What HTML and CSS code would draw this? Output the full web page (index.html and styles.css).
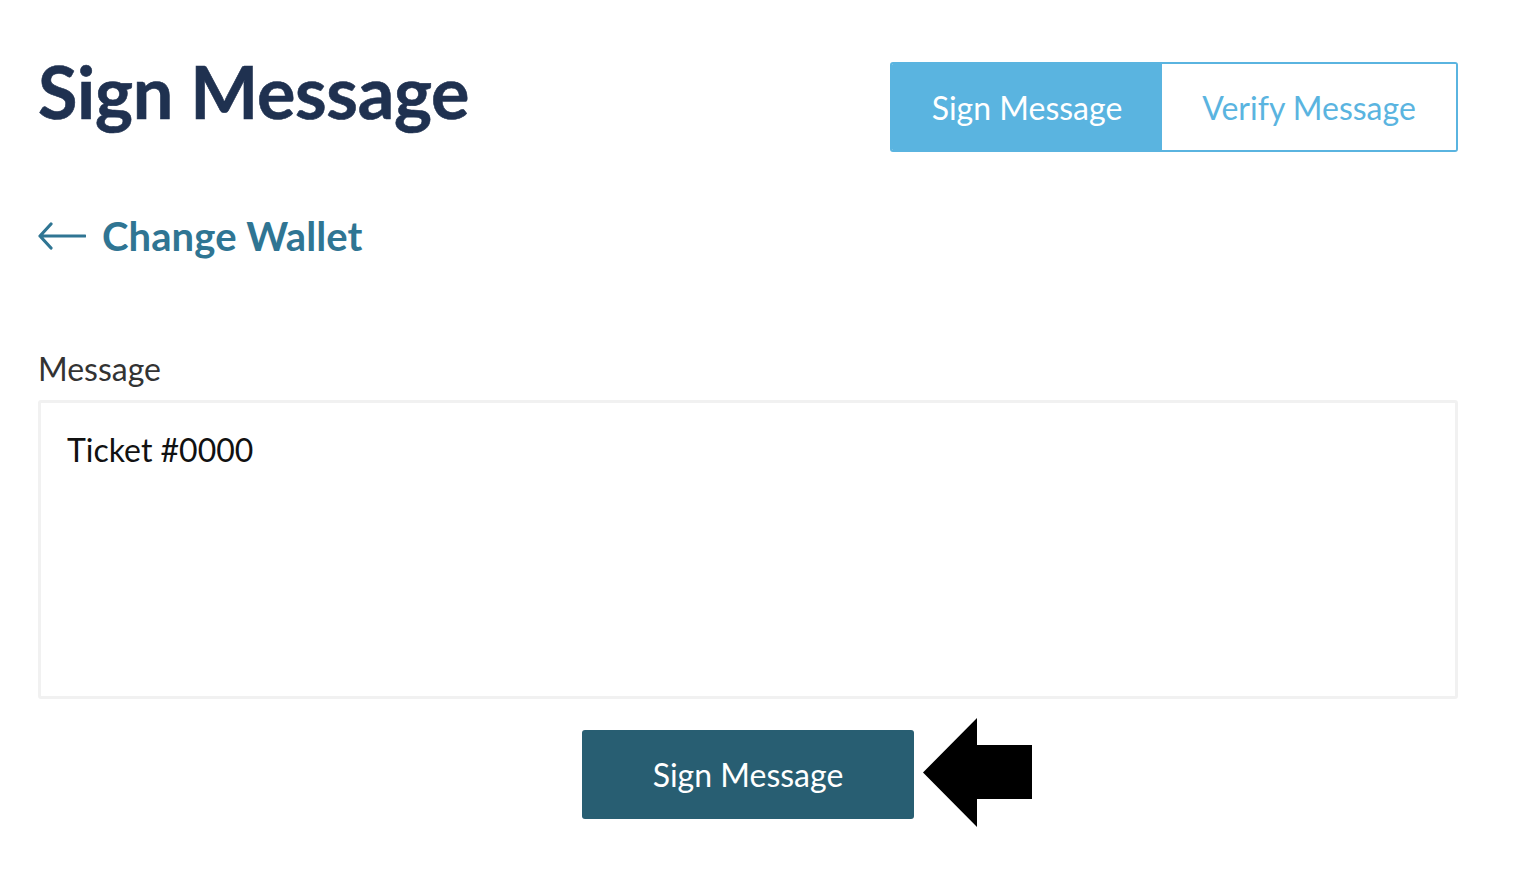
FILE: index.html
```html
<!DOCTYPE html>
<html lang="en">
<head>
<meta charset="utf-8">
<title>Sign Message</title>
<link rel="stylesheet" href="styles.css">
</head>
<body>
<main class="page">
  <header class="header">
    <h1 class="title">Sign Message</h1>
    <div class="toggle">
      <button class="toggle-btn active">Sign Message</button>
      <button class="toggle-btn">Verify Message</button>
    </div>
  </header>
  <a class="back" href="#">
    <svg class="back-icon" width="48" height="28" viewBox="0 0 48 28" aria-hidden="true">
      <path d="M2 14 H47 M13 2 L2 14 L13 26" fill="none" stroke="currentColor" stroke-width="3.2" stroke-linecap="round" stroke-linejoin="round"/>
    </svg>
    <span>Change Wallet</span>
  </a>
  <label class="label" for="msg">Message</label>
  <textarea id="msg" class="message">Ticket #0000</textarea>
  <div class="actions">
    <button class="submit">Sign Message</button>
    <svg class="pointer" width="110" height="110" viewBox="0 0 110 110" aria-hidden="true">
      <polygon points="0,54.5 54,0 54,27 109,27 109,81 54,81 54,109" fill="#000"/>
    </svg>
  </div>
</main>
</body>
</html>
```
FILE: styles.css
```css
* { box-sizing: border-box; }
html, body { margin: 0; background: #fff; }
body { font-family: Lato, "Open Sans", sans-serif; }
.page { width: 1420px; margin-left: 38px; padding-top: 62px; padding-bottom: 50px; }
.header { display: flex; justify-content: space-between; align-items: flex-start; }
.title { margin: -14px 0 0 0; font-size: 72px; font-weight: 700; color: #1f3150; line-height: 1.2; letter-spacing: -0.3px; -webkit-text-stroke: 0.6px #1f3150; }
.toggle { display: flex; width: 568px; height: 90px; border: 2px solid #5ab4e0; border-radius: 3px; overflow: hidden; }
.toggle-btn { font-family: inherit; font-size: 32px; border: 0; background: #fff; color: #5ab4e0; padding: 0; cursor: pointer; }
.toggle-btn:first-child { width: 270px; }
.toggle-btn:last-child { flex: 1; }
.toggle-btn.active { background: #5ab4e0; color: #fff; }
.back { display: inline-flex; align-items: center; gap: 16px; margin-top: 60px; color: #2f7593; text-decoration: none; font-size: 40px; font-weight: 700; letter-spacing: 0.1px; }
.back-icon { display: block; }
.label { display: block; margin-top: 89px; font-size: 32px; color: #333; }
.message { display: block; width: 1420px; height: 299px; margin-top: 12px; border: 3px solid #f1f1f1; border-radius: 3px; padding: 27px 26px; font-family: inherit; font-size: 32px; color: #111; resize: none; outline: none; }
.actions { display: flex; justify-content: center; align-items: center; position: relative; margin-top: 31px; }
.submit { width: 332px; height: 89px; background: #285e72; color: #fff; border: 0; border-radius: 3px; font-family: inherit; font-size: 32px; cursor: pointer; }
.pointer { display: block; position: absolute; left: 885px; top: -12px; overflow: visible; }
```
